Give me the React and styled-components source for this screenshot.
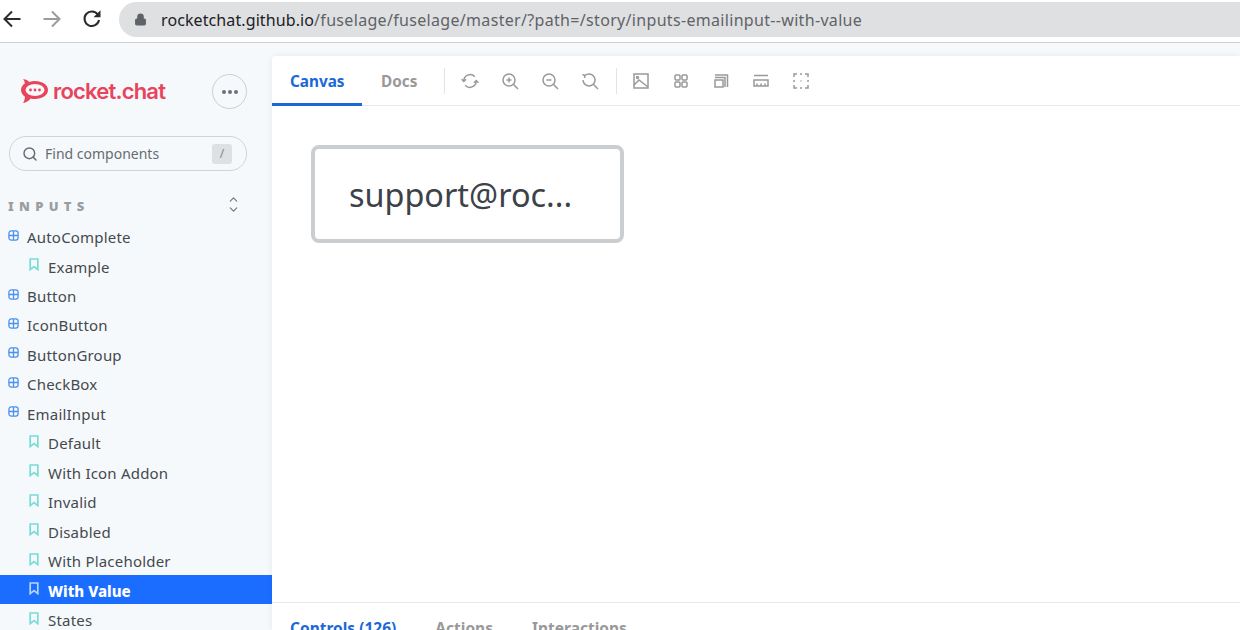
import React from "react"
import styled, { createGlobalStyle } from "styled-components"
import { Lock, Search, ChevronUp, ChevronDown } from "lucide-react"

const GlobalStyle = createGlobalStyle`
  html, body {
    margin: 0;
    height: 100%;
    overflow: hidden;
    background: #f6f9fc;
    font-family: "Noto Sans", "Open Sans", sans-serif;
  }
  #root { height: 100%; }
`

const Page = styled.div`
  width: 1240px;
  height: 630px;
  display: flex;
  flex-direction: column;
  overflow: hidden;
`

const BrowserBar = styled.header`
  height: 42px;
  flex: none;
  display: flex;
  align-items: flex-start;
  background: #fff;
  border-bottom: 1px solid #cfd1d5;
`

const NavButton = styled.span`
  width: 20px;
  height: 37px;
  margin-left: ${p => p.$left}px;
  display: flex;
  align-items: center;
  justify-content: center;
  color: ${p => (p.$muted ? "#9a9b9e" : "#2b2c2e")};
`

const AddressBar = styled.div`
  flex: 1;
  height: 35px;
  margin: 2px 0 0 17px;
  padding-left: 15px;
  display: flex;
  align-items: center;
  gap: 14px;
  background: #dfe0e2;
  border-radius: 18px 0 0 18px;
  font-size: 16px;
  letter-spacing: 0.1px;
  color: #5f6368;
`

const Host = styled.span`
  color: #202124;
`

const UrlPath = styled.span`
  letter-spacing: 0.32px;
`

const Body = styled.div`
  flex: 1;
  display: flex;
  min-height: 0;
`

const Sidebar = styled.aside`
  width: 272px;
  flex: none;
  background: #f6f9fc;
`

const SideHead = styled.div`
  height: 93px;
  padding: 30px 25px 0 21px;
  box-sizing: border-box;
  display: flex;
  justify-content: space-between;
  align-items: flex-start;
`

const Logo = styled.div`
  display: flex;
  align-items: center;
  gap: 5px;
  height: 30px;
  margin-top: 3px;
  font-family: "Inter", sans-serif;
  font-size: 22px;
  font-weight: 600;
  letter-spacing: -0.8px;
  color: #e8445c;
`

const MenuButton = styled.div`
  width: 33px;
  height: 33px;
  margin-top: 1px;
  border: 1px solid #c9ced3;
  border-radius: 50%;
  display: flex;
  align-items: center;
  justify-content: center;
  gap: 2px;
`

const Dot = styled.i`
  width: 4px;
  height: 4px;
  border-radius: 50%;
  background: #6b7278;
`

const SearchBox = styled.div`
  height: 33px;
  margin: 0 25px 0 9px;
  padding: 0 14px 0 12px;
  display: flex;
  align-items: center;
  gap: 7px;
  border: 1px solid #cfd4d9;
  border-radius: 17px;
  font-size: 14px;
  color: #666c72;
`

const SearchText = styled.span`
  flex: 1;
`

const Key = styled.kbd`
  width: 20px;
  height: 20px;
  display: flex;
  align-items: center;
  justify-content: center;
  border-radius: 3px;
  background: #dee1e4;
  color: #80868c;
  font-family: inherit;
  font-size: 12px;
`

const GroupHead = styled.div`
  height: 20px;
  margin-top: 25px;
  padding: 0 32px 0 8px;
  display: flex;
  align-items: center;
  justify-content: space-between;
  font-size: 13px;
  font-weight: 900;
  letter-spacing: 5.3px;
  color: #999ea3;
`

const Chevrons = styled.span`
  display: flex;
  flex-direction: column;
  color: #6f757a;
  margin-top: -4px;

  svg { display: block; margin: -1.5px 0; }
`

const Tree = styled.ul`
  list-style: none;
  margin: 5.4px 0 0;
  padding: 0;
`

const Item = styled.li`
  height: 29.46px;
  box-sizing: border-box;
  padding: 2px 0 0 ${p => (p.$story ? 29 : 8)}px;
  display: flex;
  align-items: center;
  gap: ${p => (p.$story ? 9 : 8)}px;
  font-size: 15px;
  letter-spacing: ${p => (p.$active ? 0 : 0.2)}px;
  font-weight: ${p => (p.$active ? 800 : 400)};
  color: ${p => (p.$active ? "#fff" : "#44494e")};
  background: ${p => (p.$active ? "#1a6dff" : "transparent")};

  svg { margin-top: -4px; flex: none; }
`

const Main = styled.main`
  flex: 1;
  margin-top: 13px;
  display: flex;
  flex-direction: column;
  background: #fff;
  border-radius: 4px 0 0 0;
  box-shadow: 0 0 6px rgba(0, 0, 0, 0.07);
  min-width: 0;
`

const Toolbar = styled.div`
  height: 50px;
  box-sizing: border-box;
  flex: none;
  display: flex;
  align-items: center;
  border-bottom: 1px solid #e6e8ea;
`

const Tab = styled.div`
  width: ${p => p.$width}px;
  height: 50px;
  box-sizing: border-box;
  padding: 3px 0 0 ${p => p.$pad}px;
  display: flex;
  align-items: center;
  font-size: 15.3px;
  font-weight: 700;
  color: ${p => (p.$active ? "#1a68d8" : "#999")};
  border-bottom: 3px solid ${p => (p.$active ? "#1a68d8" : "transparent")};
`

const Divider = styled.span`
  width: 1px;
  height: 26px;
  background: #e2e4e6;
  margin: 0 ${p => p.$right}px 0 ${p => p.$left}px;
`

const ToolIcon = styled.svg`
  width: 20px;
  height: 20px;
  flex: none;
  margin-right: 20px;
  fill: none;
  stroke: #999;
  stroke-width: 1.5;
`

const Canvas = styled.div`
  flex: 1;
  min-height: 0;
  padding: 39px;
`

const EmailField = styled.div`
  width: 313px;
  height: 98px;
  box-sizing: border-box;
  padding: 0 34px;
  display: flex;
  align-items: center;
  border: 4px solid #cbced1;
  border-radius: 8px;
  font-size: 32.4px;
  color: #3c4248;
`

const Addons = styled.div`
  height: 28px;
  box-sizing: border-box;
  flex: none;
  display: flex;
  gap: 39px;
  padding: 14px 0 0 18px;
  border-top: 1px solid #e6e8ea;
  font-size: 15.5px;
  font-weight: 700;
  overflow: hidden;
`

const AddonTab = styled.span`
  color: ${p => (p.$active ? "#1a68d8" : "#999")};
`

const BackIcon = ({ flip }) => (
  <svg width="20" height="20" viewBox="0 0 20 20" fill="none" stroke="currentColor" strokeWidth="2"
    style={flip ? { transform: "scaleX(-1)" } : undefined}>
    <path d="M18.500 10H2.500M10 2.500L2.500 10l7.500 7.500" />
  </svg>
)

const ReloadIcon = () => (
  <svg width="20" height="20" viewBox="0 0 20 20" fill="none" stroke="currentColor" strokeWidth="2">
    <path d="M15.800 5.500A7.300 7.300 0 1 0 17 11" />
    <path d="M11.500 8.200h7V1.200z" fill="currentColor" stroke="none" />
  </svg>
)

const ComponentIcon = () => (
  <svg width="11" height="11" viewBox="0 0 12 12" fill="none" stroke="#4b8ff0" strokeWidth="1.4">
    <rect x="1" y="1" width="10" height="10" rx="2.500" />
    <path d="M6 1v10M1 6h10" />
  </svg>
)

const StoryIcon = ({ color }) => (
  <svg width="10" height="13" viewBox="0 0 10 13" fill="none" stroke={color} strokeWidth="1.700">
    <path d="M1.200 1h7.600v10.600L5 8.600l-3.800 3z" />
  </svg>
)

const RocketLogo = () => (
  <svg width="27" height="24" viewBox="1 1 27 24">
    <path
      d="M3 1c3 .4 5 1.600 6.400 3C11 3.400 13 3 15 3c7 0 13 3.600 13 9s-6 9-13 9c-1.600 0-3-.2-4.400-.6C8.800 22.800 6 24.600 3 25c1.400-2 2-4 1.800-6.400C2.400 16.800 1 14.600 1 12c0-2.400 1.400-4.800 3.800-6.400C4.800 4 4.200 2.400 3 1z"
      fill="#e8445c"
    />
    <ellipse cx="15" cy="12" rx="9.500" ry="6" fill="#f6f9fc" />
    <circle cx="10.500" cy="12" r="1.400" fill="#e8445c" />
    <circle cx="15" cy="12" r="1.400" fill="#e8445c" />
    <circle cx="19.500" cy="12" r="1.400" fill="#e8445c" />
  </svg>
)

const tools = [
  <><path d="M3.800 10a6.300 6.300 0 0 1 11-4.200M16.200 10a6.300 6.300 0 0 1-11 4.200" /><path d="M1.600 8.200l2.200 2.200 2.200-2.200M14 11.800l2.200-2.200 2.200 2.200" /></>,
  <><circle cx="9" cy="9" r="6" /><path d="M13.500 13.500L18 18M6.500 9h5M9 6.500v5" /></>,
  <><circle cx="9" cy="9" r="6" /><path d="M13.500 13.500L18 18M6.500 9h5" /></>,
  <><path d="M5 4.500A6 6 0 1 1 3 9" /><path d="M13.500 13.500L18 18M2.500 3.500L5 4.500l-.5 2.500" /></>,
]

const tools2 = [
  <><rect x="3" y="3" width="14" height="14" /><path d="M3 14l5-5 9 7" /><circle cx="6.500" cy="6.500" r="1" /></>,
  <><rect x="4" y="4" width="5" height="5" rx="1" /><rect x="11" y="4" width="5" height="5" rx="1" /><rect x="4" y="11" width="5" height="5" rx="1" /><rect x="11" y="11" width="5" height="5" rx="1" /></>,
  <><rect x="4" y="9" width="8" height="7" /><path d="M4 6.500h10V16M4 4h12.500v12" /></>,
  <><rect x="3" y="9" width="14" height="6" /><path d="M3 4.500h14M6 12.500V15M10 12.500V15M14 12.500V15" /></>,
  <><path d="M3 6V3h3M9 3h2M14 3h3v3M17 9v2M17 14v3h-3M11 17H9M6 17H3v-3M3 11V9M9.500 10h1" /></>,
]

const stories = [
  ["AutoComplete"],
  ["Example", true],
  ["Button"],
  ["IconButton"],
  ["ButtonGroup"],
  ["CheckBox"],
  ["EmailInput"],
  ["Default", true],
  ["With Icon Addon", true],
  ["Invalid", true],
  ["Disabled", true],
  ["With Placeholder", true],
  ["With Value", true, true],
  ["States", true],
]

export default function App() {
  return (
    <Page>
      <GlobalStyle />
      <BrowserBar>
        <NavButton $left={2}><BackIcon /></NavButton>
        <NavButton $left={20} $muted><BackIcon flip /></NavButton>
        <NavButton $left={20}><ReloadIcon /></NavButton>
        <AddressBar>
          <Lock size={13} fill="#5f6368" strokeWidth={2} />
          <span>
            <Host>rocketchat.github.io</Host>
            <UrlPath>/fuselage/fuselage/master/?path=/story/inputs-emailinput--with-value</UrlPath>
          </span>
        </AddressBar>
      </BrowserBar>
      <Body>
        <Sidebar>
          <SideHead>
            <Logo><RocketLogo />rocket.chat</Logo>
            <MenuButton><Dot /><Dot /><Dot /></MenuButton>
          </SideHead>
          <SearchBox>
            <Search size={16} strokeWidth={2.2} />
            <SearchText>Find components</SearchText>
            <Key>/</Key>
          </SearchBox>
          <GroupHead>
            INPUTS
            <Chevrons>
              <ChevronUp size={13} strokeWidth={2} />
              <ChevronDown size={13} strokeWidth={2} />
            </Chevrons>
          </GroupHead>
          <Tree>
            {stories.map(([name, story, active]) => (
              <Item key={name} $story={story} $active={active}>
                {story ? <StoryIcon color={active ? "#b9d3ff" : "#78dcd6"} /> : <ComponentIcon />}
                {name}
              </Item>
            ))}
          </Tree>
        </Sidebar>
        <Main>
          <Toolbar>
            <Tab $active $pad={18} $width={90}>Canvas</Tab>
            <Tab $pad={19} $width={82}>Docs</Tab>
            <Divider $left={0} $right={15} />
            {tools.map((t, i) => (
              <ToolIcon key={i} viewBox="0 0 20 20">{t}</ToolIcon>
            ))}
            <Divider $left={-4} $right={14} />
            {tools2.map((t, i) => (
              <ToolIcon key={i} viewBox="0 0 20 20">{t}</ToolIcon>
            ))}
          </Toolbar>
          <Canvas>
            <EmailField>support@roc...</EmailField>
          </Canvas>
          <Addons>
            <AddonTab $active>Controls (126)</AddonTab>
            <AddonTab>Actions</AddonTab>
            <AddonTab>Interactions</AddonTab>
          </Addons>
        </Main>
      </Body>
    </Page>
  )
}
